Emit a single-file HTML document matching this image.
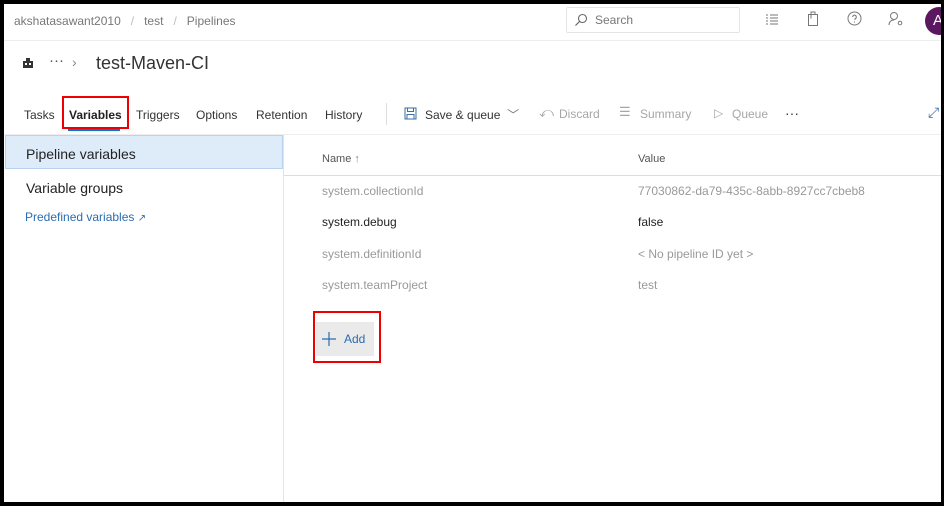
<!DOCTYPE html>
<html><head><meta charset="utf-8"><style>
*{margin:0;padding:0;box-sizing:border-box}
body{width:944px;height:506px;background:#000;position:relative;overflow:hidden;font-family:"Liberation Sans",sans-serif;color:#333}
#pg{position:absolute;left:4px;top:4px;width:937px;height:498px;background:#fff;overflow:hidden}
.a{position:absolute;white-space:nowrap}
.g{color:#a6a6a6}
</style></head><body><div id="pg">
<div class="a" style="left:0;top:0;width:937px;height:37px;border-bottom:1px solid #eee"></div>
<div class="a" style="left:10px;top:10px;font-size:12px;color:#777">akshatasawant2010 &nbsp;&nbsp;<span style="color:#bbb">/</span>&nbsp;&nbsp; test &nbsp;&nbsp;<span style="color:#bbb">/</span>&nbsp;&nbsp; Pipelines</div>
<div class="a" style="left:562px;top:3px;width:174px;height:26px;border:1px solid #e4e4e4;border-radius:2px"></div>
<svg class="a" style="left:570px;top:9px" width="14" height="14" viewBox="0 0 14 14"><circle cx="8.5" cy="5.5" r="4" fill="none" stroke="#666" stroke-width="1.1"/><path d="M5.6 8.4L1.5 12.5" stroke="#666" stroke-width="1.2"/></svg>
<div class="a" style="left:591px;top:9px;font-size:12px;color:#777">Search</div>
<svg class="a" style="left:760px;top:7px" width="16" height="16" viewBox="0 0 16 16" stroke="#777" stroke-width="1"><path d="M2 4h2M2 7h2M2 10h2M2 13h2M6 4h8M6 7h8M6 10h8M6 13h8"/></svg>
<svg class="a" style="left:802px;top:6px" width="14" height="17" viewBox="0 0 14 17" fill="none" stroke="#777"><rect x="2.5" y="4.5" width="9" height="11"/><path d="M5 4.5V2h4v2.5M5 4.5v4"/></svg>
<svg class="a" style="left:843px;top:7px" width="15" height="15" viewBox="0 0 15 15" fill="none" stroke="#777"><circle cx="7.5" cy="7.5" r="6.5"/><path d="M5.7 6a1.8 1.8 0 1 1 2.3 1.7v1.3M7.5 10.5v1"/></svg>
<svg class="a" style="left:884px;top:7px" width="16" height="16" viewBox="0 0 16 16" fill="none" stroke="#777"><circle cx="6" cy="5" r="3.5"/><path d="M1 14c0-3 2-5 5-5"/><circle cx="12" cy="12" r="1.8"/></svg>
<div class="a" style="left:921px;top:3px;width:28px;height:28px;border-radius:50%;background:#5c1761;color:#fff;font-size:15px;line-height:28px;padding-left:8px">A</div>
<svg class="a" style="left:18px;top:53px" width="12" height="12" viewBox="0 0 12 12"><rect x="1" y="4" width="10" height="7" fill="#333"/><rect x="4" y="1" width="4" height="3" fill="#333"/><rect x="3" y="6" width="2" height="2" fill="#fff"/><rect x="7" y="6" width="2" height="2" fill="#fff"/></svg>
<div class="a" style="left:45px;top:48px;font-size:15px;color:#555">···</div>
<div class="a" style="left:68px;top:50px;font-size:14px;color:#888">›</div>
<div class="a" style="left:92px;top:49px;font-size:18px;color:#333">test-Maven-CI</div>
<div class="a" style="left:20px;top:104px;font-size:12px;color:#333">Tasks</div>
<div class="a" style="left:65px;top:104px;font-size:12px;font-weight:bold;color:#222">Variables</div>
<div class="a" style="left:64px;top:125px;width:52px;height:2px;background:#0078d4"></div>
<div class="a" style="left:58px;top:92px;width:67px;height:33px;border:2px solid #e00"></div>
<div class="a" style="left:132px;top:104px;font-size:12px">Triggers</div>
<div class="a" style="left:192px;top:104px;font-size:12px">Options</div>
<div class="a" style="left:252px;top:104px;font-size:12px">Retention</div>
<div class="a" style="left:321px;top:104px;font-size:12px">History</div>
<div class="a" style="left:382px;top:99px;width:1px;height:22px;background:#ddd"></div>
<svg class="a" style="left:400px;top:103px" width="13" height="13" viewBox="0 0 13 13" fill="none" stroke="#3a6ea5"><rect x="1" y="1" width="11" height="11"/><rect x="3.5" y="1" width="6" height="3.5"/><rect x="3" y="7.5" width="7" height="4.5"/></svg>
<div class="a" style="left:421px;top:102px;font-size:12px">Save &amp; queue &nbsp;<span style="color:#777">﹀</span></div>
<div class="a g" style="left:535px;top:100px;font-size:14px">⤺</div>
<div class="a g" style="left:555px;top:103px;font-size:12px">Discard</div>
<div class="a g" style="left:615px;top:100px;font-size:13px">☰</div>
<div class="a g" style="left:636px;top:103px;font-size:12px">Summary</div>
<div class="a g" style="left:710px;top:102px;font-size:12px">▷</div>
<div class="a g" style="left:728px;top:103px;font-size:12px">Queue</div>
<div class="a" style="left:781px;top:101px;font-size:14px;color:#333">···</div>
<div class="a" style="left:924px;top:100px;font-size:14px;color:#3a6ea5">⤢</div>
<div class="a" style="left:0;top:130px;width:937px;height:1px;background:#eee"></div>
<div class="a" style="left:1px;top:131px;width:278px;height:34px;background:#deecf9;border:1px solid #b9d3ee"></div>
<div class="a" style="left:22px;top:142px;font-size:14px;color:#222">Pipeline variables</div>
<div class="a" style="left:22px;top:176px;font-size:14px;color:#222">Variable groups</div>
<div class="a" style="left:21px;top:206px;font-size:12px;color:#2b6cb0">Predefined variables <span style="font-size:10px">↗</span></div>
<div class="a" style="left:279px;top:131px;width:1px;height:367px;background:#e4e4e4"></div>
<div class="a" style="left:318px;top:149px;font-size:11px;color:#555">Name <span style="color:#888">↑</span></div>
<div class="a" style="left:634px;top:149px;font-size:11px;color:#555">Value</div>
<div class="a" style="left:280px;top:171px;width:657px;height:1px;background:#ddd"></div>
<div class="a" style="left:318px;top:180px;font-size:12px;color:#999">system.collectionId</div>
<div class="a" style="left:634px;top:180px;font-size:12px;color:#999">77030862-da79-435c-8abb-8927cc7cbeb8</div>
<div class="a" style="left:318px;top:211px;font-size:12px;color:#222">system.debug</div>
<div class="a" style="left:634px;top:211px;font-size:12px;color:#222">false</div>
<div class="a" style="left:318px;top:243px;font-size:12px;color:#999">system.definitionId</div>
<div class="a" style="left:634px;top:243px;font-size:12px;color:#999">&lt; No pipeline ID yet &gt;</div>
<div class="a" style="left:318px;top:274px;font-size:12px;color:#999">system.teamProject</div>
<div class="a" style="left:634px;top:274px;font-size:12px;color:#999">test</div>
<div class="a" style="left:312px;top:318px;width:58px;height:34px;background:#eaeaea"></div>
<svg class="a" style="left:318px;top:328px" width="14" height="14" viewBox="0 0 14 14" stroke="#2b6cb0" stroke-width="1.2"><path d="M7 0v14M0 7h14"/></svg>
<div class="a" style="left:340px;top:328px;font-size:12px;color:#2b6cb0">Add</div>
<div class="a" style="left:309px;top:307px;width:68px;height:52px;border:2px solid #e00"></div>
</div></body></html>
